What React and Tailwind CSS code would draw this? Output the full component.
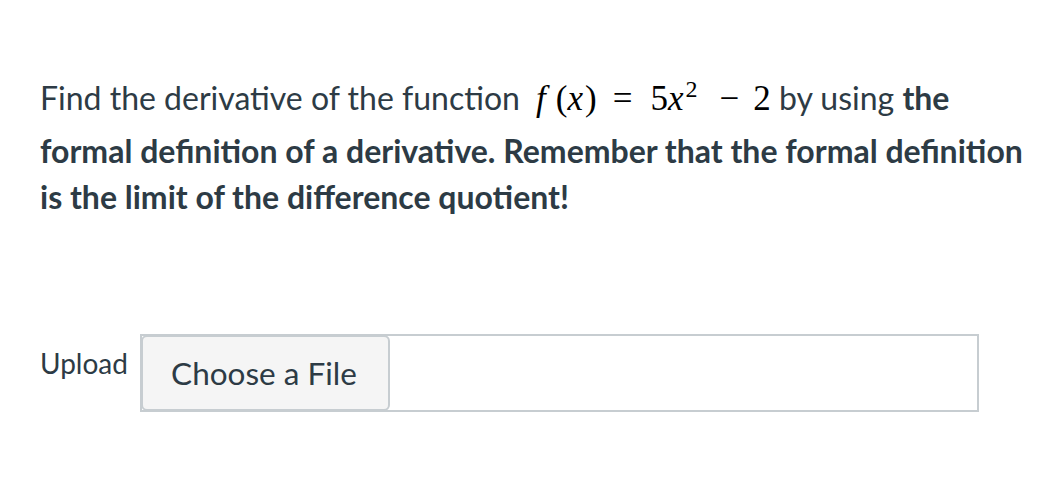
export default function App() {
  return (
    <div className="w-[1064px] h-[504px] bg-white text-[#2d3b45]" style={{ fontFamily: 'Lato, "Noto Sans", sans-serif' }}>
      <div className="pl-[40px] pt-[70px] w-[1040px] text-[32px] leading-[46px]">
        <p>
          Find the derivative of the function{' '}
          <span className="text-black text-[35px] leading-[58px] whitespace-nowrap ml-[8px]" style={{ fontFamily: '"Liberation Serif", "DejaVu Serif", serif' }}>
            <i>f</i>
            <span className="ml-[10px]">(</span>
            <i>x</i>
            <span className="ml-[2px]">)</span>
            <span className="ml-[16px]">=</span>
            <span className="ml-[18px]">5</span>
            <i>x</i>
            <sup className="text-[24px] -top-[13px] ml-[2px]">2</sup>
            <span className="ml-[22px]">−</span>
            <span className="ml-[14px]">2</span>
          </span>{' '}
          by using <b>the formal definition of a derivative. Remember that the formal definition is the limit of the difference quotient!</b>
        </p>
      </div>
      <div className="pl-[40px] pt-[114px] flex items-start">
        <span className="text-[28px] mt-[8px] w-[100px]">Upload</span>
        <div className="w-[839px] h-[78px] border-2 border-[#c7cdd1] flex items-stretch">
          <button className="w-[249px] h-[76px] -mt-px -ml-[1px] bg-[#f5f5f5] border-2 border-[#c7cdd1] rounded-[6px] text-[31.5px] text-[#2d3b45] flex items-center justify-center pr-[3px] pt-[2px]">
            Choose a File
          </button>
        </div>
      </div>
    </div>
  );
}
